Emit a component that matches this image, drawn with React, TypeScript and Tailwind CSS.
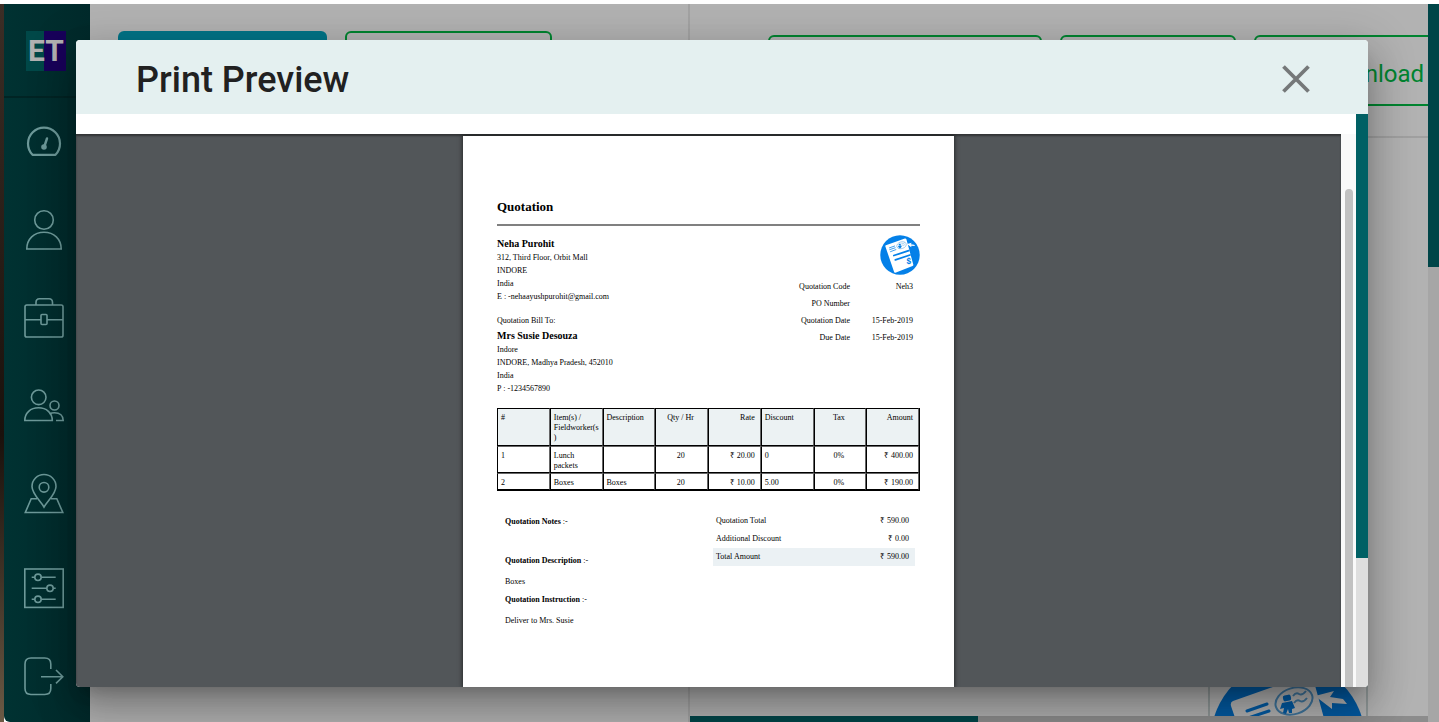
import type { ReactNode } from "react";

type Align = "left" | "center" | "right";

const alignClass: Record<Align, string> = {
  left: "text-left pl-[3px] pr-0.5",
  center: "text-center pl-0.5 pr-1",
  right: "text-right pl-0.5 pr-[5px]",
};

const columns: { label: string; align: Align }[] = [
  { label: "#", align: "left" },
  { label: "Item(s) / Fieldworker(s)", align: "left" },
  { label: "Description", align: "left" },
  { label: "Qty / Hr", align: "center" },
  { label: "Rate", align: "right" },
  { label: "Discount", align: "left" },
  { label: "Tax", align: "center" },
  { label: "Amount", align: "right" },
];

const rows = [
  ["1", "Lunch packets", "", "20", "₹ 20.00", "0", "0%", "₹ 400.00"],
  ["2", "Boxes", "Boxes", "20", "₹ 10.00", "5.00", "0%", "₹ 190.00"],
];

const details = [
  ["Quotation Code", "Neh3"],
  ["PO Number", ""],
  ["Quotation Date", "15-Feb-2019"],
  ["Due Date", "15-Feb-2019"],
];

const totals = [
  ["Quotation Total", "₹ 590.00"],
  ["Additional Discount", "₹ 0.00"],
  ["Total Amount", "₹ 590.00"],
];

function NavIcon({ children }: { children: ReactNode }) {
  return (
    <svg viewBox="0 0 40 40" className="size-10 overflow-visible" fill="none" stroke="#6d9999" strokeWidth="1.6">
      {children}
    </svg>
  );
}

const navItems: { label: string; icon: ReactNode }[] = [
  {
    label: "Dashboard",
    icon: (
      <>
        <path d="M8.500 32.800A16 16 0 1 1 31.500 32.800Z" strokeWidth="2.200" strokeLinejoin="round" />
        <path d="M23 16.500 20.500 24" strokeWidth="2.400" strokeLinecap="round" />
        <circle cx="20" cy="25" r="2" fill="#6d9999" />
      </>
    ),
  },
  {
    label: "Clients",
    icon: (
      <>
        <circle cx="20" cy="10" r="9.300" />
        <path d="M2.800 39C2.800 29 10 22.200 20 22.200S37.200 29 37.200 39Z" />
      </>
    ),
  },
  {
    label: "Jobs",
    icon: (
      <>
        <rect x="1" y="7" width="38" height="32" rx="1.800" />
        <path d="M12 7V4.500Q12 .8 15.500 .8H25Q28.500 .8 28.500 4.500V7M1 21.700H17M23 21.700H39" />
        <rect x="17" y="16.500" width="6" height="10" rx="1" />
      </>
    ),
  },
  {
    label: "Team",
    icon: (
      <>
        <circle cx="14.700" cy="11.300" r="7.300" />
        <path d="M.8 34.500C.8 27 6.500 21.800 14.500 21.800S28.300 27 28.300 34.500Z" />
        <circle cx="30.500" cy="19.500" r="4.500" />
        <path d="M25.500 28Q27.500 26.800 30.500 26.800C36 26.800 39.200 30 39.200 34.500H32" />
      </>
    ),
  },
  {
    label: "Map",
    icon: (
      <>
        <path d="M20 33C17 27.500 8 20 8 12.500A12 12 0 0 1 32 12.500C32 20 23 27.500 20 33Z" />
        <circle cx="20" cy="13.300" r="4.800" />
        <path d="M13 24.700H7.200L1.300 38.500H38.800L32.800 24.700H27" />
      </>
    ),
  },
];

const footerItems: { label: string; icon: ReactNode }[] = [
  {
    label: "Settings",
    icon: (
      <>
        <rect x=".8" y="1" width="38.400" height="38.400" />
        <path d="M7.700 9.300H11M17.200 9.300H31.700M7.700 20.300H23M29 20.300H31.700M7.700 31.300H11M17.200 31.300H31.700" />
        <circle cx="14" cy="9.300" r="3.200" />
        <circle cx="26" cy="20.300" r="3.200" />
        <circle cx="14" cy="31.300" r="3.200" />
      </>
    ),
  },
  {
    label: "Log out",
    icon: (
      <path d="M26.800 13V8Q26.800 2 20.800 2H7Q1 2 1 8V32.500Q1 38.500 7 38.500H20.800Q26.800 38.500 26.800 32.500V28M17 20.700H38.500M32 14 38.800 20.700 32 27.400" />
    ),
  },
];

function CompanyLogo({ className, children }: { className: string; children?: ReactNode }) {
  return (
    <svg viewBox="0 0 156 156" className={className} fill="none">
      <circle cx="78" cy="78" r="77" fill="#0480e8" />
      <path d="M23 40 97 14Q101 13 103 17L130 116Q131 120 127 121L60 147Q56 148 55 144L21 45Q20 41 23 40Z" fill="#fff" />
      <g stroke="#0480e8" strokeLinecap="round">
        <path d="M37 50 57 43M38 57 59 50M41 65 62 57" strokeWidth="3" />
        <path d="M54 80 112 61M60 97 117 78" strokeWidth="7" />
      </g>
      <g stroke="#5ca7df" strokeWidth="2">
        <ellipse cx="84" cy="40" rx="19" ry="13" transform="rotate(-18 84 40)" />
        <path d="M83 35Q86 31 89 33T96 30M84 42Q87 38 90 40T97 37" />
      </g>
      <g fill="#0480e8">
        <rect x="73" y="34" width="8" height="6" rx="2" transform="rotate(-12 77 37)" />
        <path d="M72 42 82 40 85 47 82 48 82 52 79 52 78 48 76 53 73 52 74 47 70 48Z" />
      </g>
      <path d="M105 35 124 30 120 36 133 38 137 43 122 42 122 48Z" fill="#fff" />
      {children}
    </svg>
  );
}

function Sidebar() {
  return (
    <aside className="flex w-[86px] shrink-0 flex-col rounded-bl-md bg-linear-to-r from-[#003232] to-[#002a2b]">
      <div className="flex h-[94px] items-center border-b-2 border-[#002424] pt-0.5 pl-[22px]">
        <div className="flex size-10 items-center justify-center bg-linear-to-r from-[#004848] from-45% to-[#18005a] to-45% font-['Liberation_Sans_Narrow','Roboto',sans-serif] text-3xl leading-none font-bold text-[#b2b2b2]">
          ET
        </div>
      </div>
      <nav>
        {navItems.map((item) => (
          <a key={item.label} href="#" aria-label={item.label} className="flex h-22 items-center pl-5">
            <NavIcon>{item.icon}</NavIcon>
          </a>
        ))}
        <div className="pt-1.5">
          {footerItems.map((item) => (
            <a key={item.label} href="#" aria-label={item.label} className="flex h-22 items-center pl-5">
              <NavIcon>{item.icon}</NavIcon>
            </a>
          ))}
        </div>
      </nav>
    </aside>
  );
}

function Workspace() {
  return (
    <main className="grid min-w-0 flex-1 grid-cols-[600fr_738fr] bg-[#b2b2b2]">
      <section className="flex items-start gap-[18px] border-r-2 border-[#a3a3a3] pt-[27px] pl-7">
        <button aria-label="New quotation" className="h-[70px] w-[209px] rounded-md bg-[#007487]" />
        <button aria-label="Filter" className="h-[70px] w-[207px] rounded-md border-2 border-[#008430]" />
      </section>
      <section className="flex min-w-0 flex-col overflow-hidden">
        <div className="flex h-[134px] shrink-0 items-start gap-[18px] border-b-2 border-[#a0a0a0] pt-[31px] pl-[78px]">
          <button aria-label="Convert" className="h-[71px] w-[274px] shrink-0 rounded-md border-2 border-[#008430]" />
          <button aria-label="Email" className="h-[71px] w-44 shrink-0 rounded-md border-2 border-[#008430]" />
          <button className="h-[71px] w-[190px] shrink-0 rounded-md border-2 border-[#008430] pt-1.5 pr-[18px] text-right font-['Roboto'] text-2xl text-[#008430]">
            Download
          </button>
        </div>
        <div className="flex min-h-0 flex-1 items-end justify-end pr-15">
          <div className="h-[55px] w-40 overflow-hidden border-x-2 border-[#8f9797]">
            <CompanyLogo className="size-[156px] brightness-70" />
          </div>
        </div>
        <div className="h-1.5 shrink-0 bg-[#8c8c8c]">
          <div className="h-full w-[39%] bg-[#004548]" />
        </div>
      </section>
    </main>
  );
}

function QuotationTable() {
  return (
    <table className="mt-[13px] w-full table-fixed border-separate border-spacing-0 border-r border-b border-black leading-[10px]">
      <thead>
        <tr className="bg-[#ecf2f3]">
          {columns.map((col) => (
            <th
              key={col.label}
              className={`border border-black border-r-[#666] pt-1 pb-0.5 align-top font-normal wrap-break-word ${alignClass[col.align]}`}
            >
              {col.label}
            </th>
          ))}
        </tr>
      </thead>
      <tbody>
        {rows.map((row) => (
          <tr key={row[0]}>
            {row.map((cell, i) => (
              <td
                key={columns[i].label}
                className={`border border-black border-t-[#666] border-r-[#666] pt-1 pb-px align-top ${alignClass[columns[i].align]}`}
              >
                {cell}
              </td>
            ))}
          </tr>
        ))}
      </tbody>
    </table>
  );
}

function QuotationPage() {
  return (
    <article className="mt-0.5 w-[491px] shrink-0 bg-white px-[34px] pt-[61px] font-['Liberation_Serif',serif] text-[8px] leading-[13px] text-black shadow-[0_0_4px_1px_rgba(0,0,0,0.5)]">
      <h2 className="border-b-2 border-[#808080] pb-[7px] text-[13px] leading-5 font-bold">Quotation</h2>
      <div className="flex justify-between">
        <div className="pt-[11px]">
          <h3 className="text-[10px] leading-[14px] font-bold">Neha Purohit</h3>
          <p>312, Third Floor, Orbit Mall</p>
          <p>INDORE</p>
          <p>India</p>
          <p>E : -nehaayushpurohit@gmail.com</p>
          <p className="pt-[11px] pb-0.5">Quotation Bill To:</p>
          <h3 className="text-[10px] leading-[14px] font-bold">Mrs Susie Desouza</h3>
          <p>Indore</p>
          <p>INDORE, Madhya Pradesh, 452010</p>
          <p>India</p>
          <p>P : -1234567890</p>
        </div>
        <div className="flex flex-col items-end pt-[9px]">
          <CompanyLogo className="mb-[3px] size-10">
            <text x="103" y="114" fontSize="32" fontWeight="700" fill="#0480e8" className="font-['Liberation_Sans']">
              $
            </text>
          </CompanyLogo>
          <dl className="pr-[7px] text-right leading-[17px]">
            {details.map(([label, value]) => (
              <div key={label} className="flex justify-end">
                <dt>{label}</dt>
                <dd className="w-[63px]">{value}</dd>
              </div>
            ))}
          </dl>
        </div>
      </div>
      <QuotationTable />
      <div className="mt-[21px] flex items-start justify-between pr-[5px] pl-2">
        <div className="pt-[3px]">
          <p className="pb-[26px]">
            <b>Quotation Notes</b> :-
          </p>
          <p className="pb-2">
            <b>Quotation Description</b> :-
          </p>
          <p className="pb-[5px]">Boxes</p>
          <p className="pb-2">
            <b>Quotation Instruction</b> :-
          </p>
          <p>Deliver to Mrs. Susie</p>
        </div>
        <dl className="w-[202px] leading-[18px]">
          {totals.map(([label, value]) => (
            <div key={label} className="flex justify-between pr-1.5 pl-[3px] last:bg-[#ebf1f4]">
              <dt>{label}</dt>
              <dd>{value}</dd>
            </div>
          ))}
        </dl>
      </div>
    </article>
  );
}

function PrintPreview() {
  return (
    <div
      role="dialog"
      aria-labelledby="preview-title"
      className="absolute top-10 right-[71px] bottom-[35px] left-[76px] flex flex-col overflow-hidden rounded-[4px] bg-white shadow-[0_11px_15px_-7px_rgba(0,0,0,0.2),0_24px_38px_3px_rgba(0,0,0,0.2),0_9px_46px_8px_rgba(0,0,0,0.14)]"
    >
      <header className="flex h-[74px] shrink-0 items-center justify-between bg-[#e4f0f0] pt-1 pr-[58px] pl-[60px]">
        <h1 id="preview-title" className="pt-0.5 font-['Roboto',sans-serif] text-4xl font-medium text-[#212121]">
          Print Preview
        </h1>
        <button aria-label="Close">
          <svg viewBox="0 0 28 28" className="size-7" stroke="#757879" strokeWidth="3.800">
            <path d="M1.500 1.500 26.500 26.500M26.500 1.500 1.500 26.500" />
          </svg>
        </button>
      </header>
      <div className="flex min-h-0 flex-1">
        <div className="flex min-w-0 flex-1 pt-5">
          <div className="flex min-w-0 flex-1 justify-center overflow-hidden bg-[#525659] shadow-[inset_0_2px_2px_rgba(0,0,0,0.4)]">
            <QuotationPage />
          </div>
          <div className="flex w-[15px] justify-center bg-[#f9f9f9] pt-[55px]">
            <div className="w-2 rounded-t-full bg-[#c1c1c1]" />
          </div>
        </div>
        <div className="w-3 bg-[#dedede]">
          <div className="h-[77.4%] bg-[#006064]" />
        </div>
      </div>
    </div>
  );
}

export default function App() {
  return (
    <div className="relative flex h-screen flex-col overflow-hidden bg-white pt-1">
      <div className="flex min-h-0 flex-1">
        <div className="w-1 shrink-0 bg-linear-to-b from-[#3c2e26] via-[#1a110c] via-60% to-[#6b5a45]" />
        <Sidebar />
        <Workspace />
        <div className="w-[11px] shrink-0 bg-[#a6a6a6]">
          <div className="h-[36.6%] bg-[#004548]" />
        </div>
      </div>
      <PrintPreview />
    </div>
  );
}
